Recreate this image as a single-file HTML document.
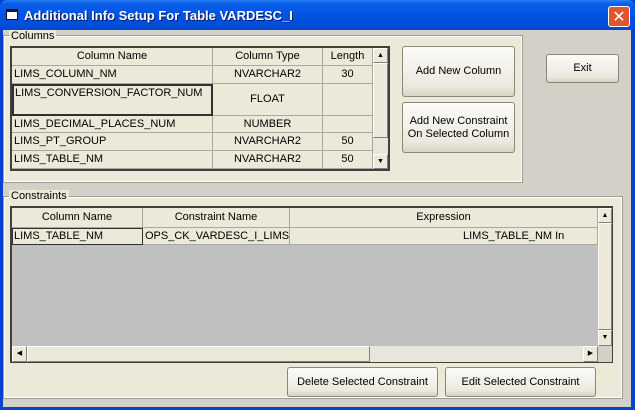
<!DOCTYPE html>
<html><head><style>
*{box-sizing:border-box;margin:0;padding:0}
body{width:635px;height:410px;overflow:hidden;background:#0841d0;font-family:"Liberation Sans",sans-serif;font-size:11px;position:relative;color:#000}
.a{position:absolute}
.tb{left:0;top:0;width:635px;height:30px;background:linear-gradient(#2a7ff5 0,#0a5fe8 12%,#0054e3 50%,#0049d0 100%);border-radius:7px 7px 0 0}
.title{left:24px;top:8px;color:#fff;font-weight:bold;font-size:13px;text-shadow:1px 1px #0a1e6a;font-family:"Liberation Sans",sans-serif}
.body{left:3px;top:30px;width:628px;height:377px;background:#d4d0c8}
.frame{background:#ece9d8;border:1px solid #fff;outline:1px solid #a09c90}
.lbl{background:#ece9d8;padding:0 2px;font-size:11px;font-family:"Liberation Sans",sans-serif}
.grid{background:#c0c0c0;border:2px solid #404040}
.c{position:absolute;border-right:1px solid #a8a8a0;border-bottom:1px solid #a8a8a0;background:#ece9d8;font-family:"Liberation Sans",sans-serif;font-size:11px;white-space:nowrap;overflow:hidden}
.btn{position:absolute;border:1px solid #8a8778;border-radius:3px;background:linear-gradient(#fbfbf8,#ebe9df 80%,#d6d2c2);text-align:center;font-family:"Liberation Sans",sans-serif;font-size:11px;display:flex;align-items:center;justify-content:center;line-height:13px}
.sb{position:absolute;background:#ece9d8;border:1px solid #fff;border-right-color:#808080;border-bottom-color:#808080;font-size:7px;text-align:center}
</style></head><body>
<div class="a tb"></div>
<div class="a" style="left:6px;top:9px;width:12px;height:11px;background:#fff;border:1px solid #113;border-top:3px solid #113"></div>
<div class="a title">Additional Info Setup For Table VARDESC_I</div>
<div class="a" style="left:608px;top:6px;width:22px;height:21px;background:#e0552f;border:1px solid #fff;border-radius:3px;color:#fff;font-weight:bold;font-size:16px;text-align:center;line-height:19px;font-family:'DejaVu Sans',sans-serif">✕</div>
<div class="a body"></div>

<div class="a frame" style="left:4px;top:36px;width:518px;height:146px"></div>
<div class="a lbl" style="left:9px;top:30px">Columns</div>
<div class="a grid" style="left:10px;top:46px;width:380px;height:125px"></div>
<div class="c" style="left:12px;top:48px;width:201px;height:18px;text-align:center;line-height:17px">Column Name</div>
<div class="c" style="left:213px;top:48px;width:110px;height:18px;text-align:center;line-height:17px">Column Type</div>
<div class="c" style="left:323px;top:48px;width:50px;height:18px;text-align:center;line-height:17px">Length</div>
<div class="c" style="left:12px;top:66px;width:201px;height:18px;line-height:17px;padding-left:2px">LIMS_COLUMN_NM</div>
<div class="c" style="left:213px;top:66px;width:110px;height:18px;line-height:17px;text-align:center">NVARCHAR2</div>
<div class="c" style="left:323px;top:66px;width:50px;height:18px;line-height:17px;text-align:center">30</div>
<div class="c" style="left:12px;top:84px;width:201px;height:32px;line-height:14px;padding-left:1px;border:2px solid #303030">LIMS_CONVERSION_FACTOR_NUM</div>
<div class="c" style="left:213px;top:84px;width:110px;height:32px;line-height:31px;text-align:center">FLOAT</div>
<div class="c" style="left:323px;top:84px;width:50px;height:32px"></div>
<div class="c" style="left:12px;top:116px;width:201px;height:17px;line-height:16px;padding-left:2px">LIMS_DECIMAL_PLACES_NUM</div>
<div class="c" style="left:213px;top:116px;width:110px;height:17px;line-height:16px;text-align:center">NUMBER</div>
<div class="c" style="left:323px;top:116px;width:50px;height:17px"></div>
<div class="c" style="left:12px;top:133px;width:201px;height:18px;line-height:17px;padding-left:2px">LIMS_PT_GROUP</div>
<div class="c" style="left:213px;top:133px;width:110px;height:18px;line-height:17px;text-align:center">NVARCHAR2</div>
<div class="c" style="left:323px;top:133px;width:50px;height:18px;line-height:17px;text-align:center">50</div>
<div class="c" style="left:12px;top:151px;width:201px;height:18px;line-height:17px;padding-left:2px">LIMS_TABLE_NM</div>
<div class="c" style="left:213px;top:151px;width:110px;height:18px;line-height:17px;text-align:center">NVARCHAR2</div>
<div class="c" style="left:323px;top:151px;width:50px;height:18px;line-height:17px;text-align:center">50</div>
<div class="a" style="left:373px;top:48px;width:15px;height:121px;background:#e8e6dc"></div>
<div class="sb" style="left:373px;top:48px;width:15px;height:15px;line-height:13px">▲</div>
<div class="sb" style="left:373px;top:63px;width:15px;height:75px"></div>
<div class="sb" style="left:373px;top:154px;width:15px;height:15px;line-height:13px">▼</div>

<div class="btn" style="left:402px;top:46px;width:113px;height:51px">Add New Column</div>
<div class="btn" style="left:402px;top:102px;width:113px;height:51px">Add New Constraint<br>On Selected Column</div>
<div class="btn" style="left:546px;top:54px;width:73px;height:29px">Exit</div>

<div class="a frame" style="left:4px;top:197px;width:618px;height:201px"></div>
<div class="a lbl" style="left:9px;top:190px">Constraints</div>
<div class="a grid" style="left:10px;top:206px;width:603px;height:157px"></div>
<div class="c" style="left:12px;top:208px;width:131px;height:20px;text-align:center;line-height:19px">Column Name</div>
<div class="c" style="left:143px;top:208px;width:147px;height:20px;text-align:center;line-height:19px">Constraint Name</div>
<div class="c" style="left:290px;top:208px;width:308px;height:20px;text-align:center;line-height:19px">Expression</div>
<div class="c" style="left:12px;top:228px;width:131px;height:17px;line-height:15px;padding-left:1px;border:1px solid #303030">LIMS_TABLE_NM</div>
<div class="c" style="left:143px;top:228px;width:147px;height:17px;line-height:16px;padding-left:2px">OPS_CK_VARDESC_I_LIMS_</div>
<div class="c" style="left:290px;top:228px;width:308px;height:17px;line-height:16px;padding-left:173px">LIMS_TABLE_NM In</div>
<div class="a" style="left:598px;top:208px;width:14px;height:138px;background:#e8e6dc"></div>
<div class="sb" style="left:598px;top:208px;width:14px;height:15px;line-height:13px">▲</div>
<div class="sb" style="left:598px;top:223px;width:14px;height:107px"></div>
<div class="sb" style="left:598px;top:330px;width:14px;height:16px;line-height:14px">▼</div>
<div class="a" style="left:12px;top:346px;width:586px;height:16px;background:#e8e6dc"></div>
<div class="sb" style="left:12px;top:346px;width:15px;height:16px;line-height:14px">◀</div>
<div class="sb" style="left:27px;top:346px;width:343px;height:16px"></div>
<div class="sb" style="left:583px;top:346px;width:15px;height:16px;line-height:14px">▶</div>
<div class="a" style="left:598px;top:346px;width:14px;height:16px;background:#d4d0c8"></div>

<div class="btn" style="left:287px;top:367px;width:151px;height:30px">Delete Selected Constraint</div>
<div class="btn" style="left:445px;top:367px;width:151px;height:30px">Edit Selected Constraint</div>
</body></html>
